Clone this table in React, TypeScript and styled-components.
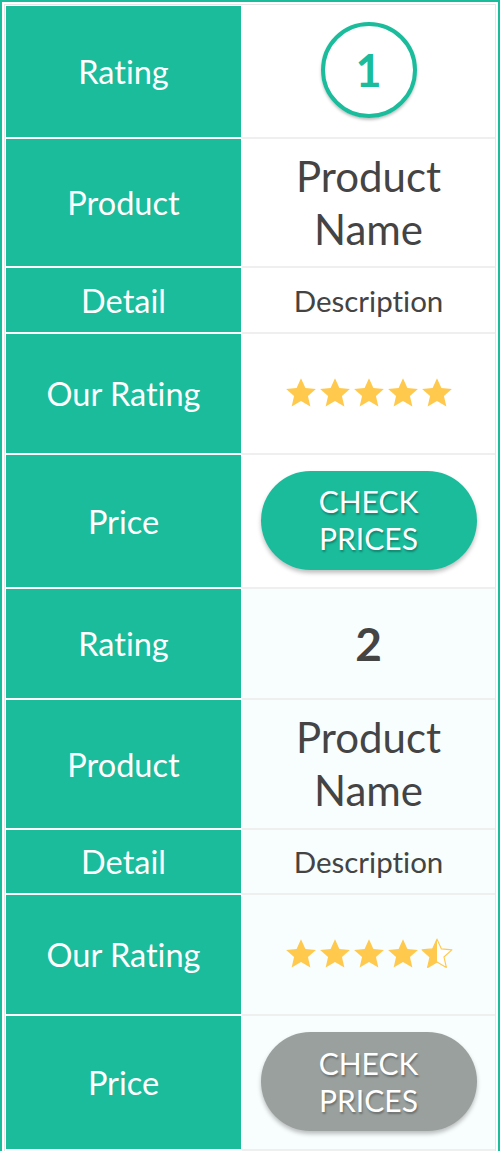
import React from 'react'
import styled, { createGlobalStyle } from 'styled-components'

const Global = createGlobalStyle`
  html, body { margin: 0; padding: 0; background: #fff; }
  body {
    font-family: Lato, "Open Sans", sans-serif;
    font-variant-ligatures: none;
  }
`

const TEAL = '#1abc9c'

const Frame = styled.div`
  width: 500px;
  box-sizing: border-box;
  border: 2px solid ${TEAL};
  border-bottom: none;
  padding: 2px 2px 0 2px;
  background: #fff;
`

const Inner = styled.div`
  border: 1px solid #e6e6e6;
  border-bottom: none;
  padding: 1px 0 0 1px;
`

const Row = styled.div<{ $h: number }>`
  display: grid;
  grid-template-columns: 236px 1fr;
  height: ${p => p.$h}px;
`

const Label = styled.div`
  background: ${TEAL};
  color: #fff;
  font-size: 32.5px;
  display: flex;
  align-items: center;
  justify-content: center;
  border-bottom: 2px solid #fff;
  border-right: 1px solid #fff;
`

const Value = styled.div<{ $alt?: boolean }>`
  background: ${p => (p.$alt ? '#f8fdfd' : '#fff')};
  color: #444;
  display: flex;
  align-items: center;
  justify-content: center;
  text-align: center;
  border-bottom: 2px solid #efefef;
`

const Circle = styled.div`
  width: 96px;
  height: 96px;
  box-sizing: border-box;
  border: 4px solid ${TEAL};
  border-radius: 50%;
  color: ${TEAL};
  font-size: 45px;
  font-weight: 700;
  display: flex;
  align-items: center;
  justify-content: center;
  box-shadow: 0 2px 3px rgba(0, 0, 0, 0.25);
  margin-top: -4px;
`

const Number = styled.div`
  font-size: 46px;
  font-weight: 700;
  color: #444;
`

const ProductName = styled.div`
  font-size: 42px;
  line-height: 53px;
`

const Detail = styled.div`
  font-size: 29.5px;
`

const Stars = styled.div`
  display: flex;
  margin-top: -2px;
`

const Button = styled.div<{ $grey?: boolean }>`
  width: 216px;
  height: 99px;
  border-radius: 50px;
  background: ${p => (p.$grey ? '#9aa09e' : TEAL)};
  color: #fff;
  font-size: 30px;
  line-height: 37px;
  display: flex;
  align-items: center;
  justify-content: center;
  text-align: center;
  text-shadow: 1px 2px 2px rgba(0, 0, 0, 0.3);
  box-shadow: 0 3px 4px rgba(0, 0, 0, 0.25);
  margin-top: -2px;
`

const STAR = 'M12 1.5l3.1 6.9 7.4.7-5.6 5 1.7 7.4L12 17.6l-6.6 3.9 1.7-7.4-5.6-5 7.4-.7z'

const Star = ({ half }: { half?: boolean }) => (
  <svg width="34" height="34" viewBox="0 0 24 24">
    <defs>
      <clipPath id="halfclip">
        <rect x="0" y="0" width="12" height="24" />
      </clipPath>
    </defs>
    {half ? (
      <>
        <path d={STAR} fill="#fff" stroke="#ffc94d" strokeWidth="0.8" strokeLinejoin="round" />
        <path d={STAR} fill="#ffc94d" clipPath="url(#halfclip)" />
      </>
    ) : (
      <path d={STAR} fill="#ffc94d" />
    )}
  </svg>
)

type Product = { rank: number; stars: number; alt?: boolean; grey?: boolean; heights: number[] }

const products: Product[] = [
  { rank: 1, stars: 5, heights: [133, 129, 66, 121, 134] },
  { rank: 2, stars: 4.5, alt: true, grey: true, heights: [111, 130, 65, 121, 135] },
]

const ProductBlock = ({ p }: { p: Product }) => (
  <>
    <Row $h={p.heights[0]}>
      <Label>Rating</Label>
      <Value $alt={p.alt}>{p.rank === 1 ? <Circle>1</Circle> : <Number>{p.rank}</Number>}</Value>
    </Row>
    <Row $h={p.heights[1]}>
      <Label>Product</Label>
      <Value $alt={p.alt}>
        <ProductName>
          Product
          <br />
          Name
        </ProductName>
      </Value>
    </Row>
    <Row $h={p.heights[2]}>
      <Label>Detail</Label>
      <Value $alt={p.alt}>
        <Detail>Description</Detail>
      </Value>
    </Row>
    <Row $h={p.heights[3]}>
      <Label>Our Rating</Label>
      <Value $alt={p.alt}>
        <Stars>
          {[0, 1, 2, 3, 4].map(i => (
            <Star key={i} half={p.stars - i === 0.5} />
          ))}
        </Stars>
      </Value>
    </Row>
    <Row $h={p.heights[4]}>
      <Label>Price</Label>
      <Value $alt={p.alt}>
        <Button $grey={p.grey}>
          CHECK
          <br />
          PRICES
        </Button>
      </Value>
    </Row>
  </>
)

export default function App() {
  return (
    <>
      <Global />
      <Frame>
        <Inner>
          {products.map(p => (
            <ProductBlock key={p.rank} p={p} />
          ))}
        </Inner>
      </Frame>
    </>
  )
}
